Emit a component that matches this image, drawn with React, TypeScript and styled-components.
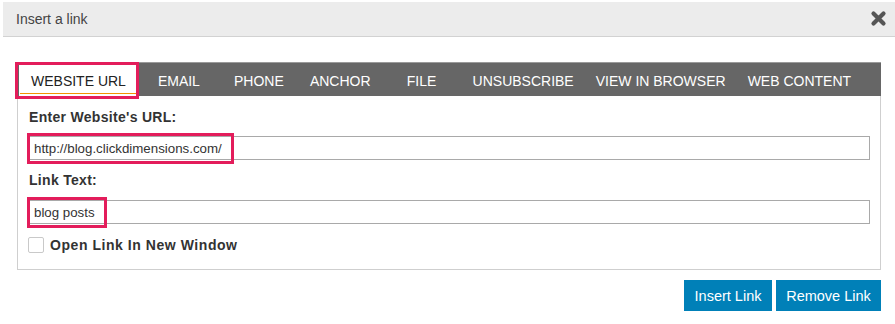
import React from "react";
import styled, { createGlobalStyle, css } from "styled-components";

const Global = createGlobalStyle`
  html, body { margin: 0; padding: 0; background: #fff; }
  body { font-family: "Liberation Sans", Arial, sans-serif; }
`;

const Page = styled.div`
  width: 895px;
  height: 324px;
  padding: 2px 0 0 3px;
  box-sizing: border-box;
  overflow: hidden;
`;

const Header = styled.div`
  height: 34px;
  background: #ececec;
  border-bottom: 1px solid #d2d2d2;
  display: flex;
  align-items: center;
  justify-content: space-between;
  padding: 0 8px 0 13px;
`;

const Title = styled.div`
  font-size: 14px;
  color: #444;
`;

const CloseBtn = styled.button`
  border: 0;
  background: transparent;
  padding: 0;
  width: 17px;
  height: 17px;
  display: flex;
  margin-top: -1px;
  cursor: pointer;
`;

const Panel = styled.div`
  margin: 25px 0 0 14px;
  width: 864px;
  height: 208px;
  box-sizing: border-box;
  border: 1px solid #cfcfcf;
  border-top: 0;
`;

const TabBar = styled.div`
  height: 34px;
  background: #666;
  display: flex;
  margin: 0 -1px 0 0;
  padding-left: 1px;
  border-top: 1px solid #9a9a9a;
  box-sizing: border-box;
`;

const Tab = styled.div<{ active?: boolean }>`
  position: relative;
  min-width: 80px;
  box-sizing: border-box;
  padding: 2px 11px 0;
  display: flex;
  align-items: center;
  justify-content: center;
  font-size: 14px;
  color: #fff;
  white-space: nowrap;
  ${({ active }) => active && css`
    background: #fff;
    color: #222;
    padding: 2px 13px 0 12px;
    &::before {
      content: "";
      position: absolute;
      left: 1px; right: 3px; bottom: 2px;
      height: 1px;
      background: #f39200;
    }
    &::after {
      content: "";
      position: absolute;
      top: -1px; left: -4px; right: 0; bottom: -3px;
      border: 3px solid #e31d5b;
    }
  `}
`;

const Body = styled.div`
  padding: 12px 10px 0 11px;
  display: flex;
  flex-direction: column;
`;

const Label = styled.label`
  font-size: 14px;
  font-weight: bold;
  color: #333;
  line-height: 18px;
  letter-spacing: 0.3px;
`;

const Field = styled.div<{ gapTop: number }>`
  position: relative;
  margin-top: ${({ gapTop }) => gapTop}px;
  height: 24px;
  border: 1px solid #a9a9a9;
  box-sizing: border-box;
  display: flex;
  align-items: center;
  padding-left: 4px;
  font-size: 13.3px;
  color: #333;
`;

const Mark = styled.span<{ w: number }>`
  position: absolute;
  left: -3px;
  top: -4px;
  width: ${({ w }) => w}px;
  height: 31px;
  box-sizing: border-box;
  border: 3px solid #e31d5b;
`;

const CheckRow = styled.div`
  margin-top: 12px;
  display: flex;
  align-items: center;
  gap: 6px;
  margin-left: -1px;
`;

const Box = styled.span`
  width: 16px;
  height: 16px;
  box-sizing: border-box;
  border: 1px solid #c9c9c9;
  border-radius: 2px;
  background: #fff;
`;

const Footer = styled.div`
  display: flex;
  justify-content: flex-end;
  gap: 4px;
  width: 878px;
  margin-top: 10px;
`;

const Button = styled.button<{ w: number }>`
  width: ${({ w }) => w}px;
  height: 31px;
  border: 0;
  background: #0080b8;
  color: #fff;
  font-family: "Liberation Sans", Arial, sans-serif;
  font-size: 14.5px;
  padding: 0;
  cursor: pointer;
`;

const tabs = ["WEBSITE URL", "EMAIL", "PHONE", "ANCHOR", "FILE", "UNSUBSCRIBE", "VIEW IN BROWSER", "WEB CONTENT"];

export default function App() {
  return (
    <Page>
      <Global />
      <Header>
        <Title>Insert a link</Title>
        <CloseBtn aria-label="Close">
          <svg width="17" height="17" viewBox="0 0 17 17">
            <path d="M3.5 3.5 L13.5 13.5 M13.5 3.5 L3.5 13.5" stroke="#555" strokeWidth="4.2" strokeLinecap="round" />
          </svg>
        </CloseBtn>
      </Header>
      <Panel>
        <TabBar>
          {tabs.map((t, i) => (
            <Tab key={t} active={i === 0}>{t}</Tab>
          ))}
        </TabBar>
        <Body>
          <Label>Enter Website's URL:</Label>
          <Field gapTop={10}>
            <Mark w={207} />
            http://blog.clickdimensions.com/
          </Field>
          <Label style={{ marginTop: 11 }}>Link Text:</Label>
          <Field gapTop={11}>
            <Mark w={80} />
            blog posts
          </Field>
          <CheckRow>
            <Box />
            <Label style={{ letterSpacing: "0.55px" }}>Open Link In New Window</Label>
          </CheckRow>
        </Body>
      </Panel>
      <Footer>
        <Button w={88}>Insert Link</Button>
        <Button w={105}>Remove Link</Button>
      </Footer>
    </Page>
  );
}
